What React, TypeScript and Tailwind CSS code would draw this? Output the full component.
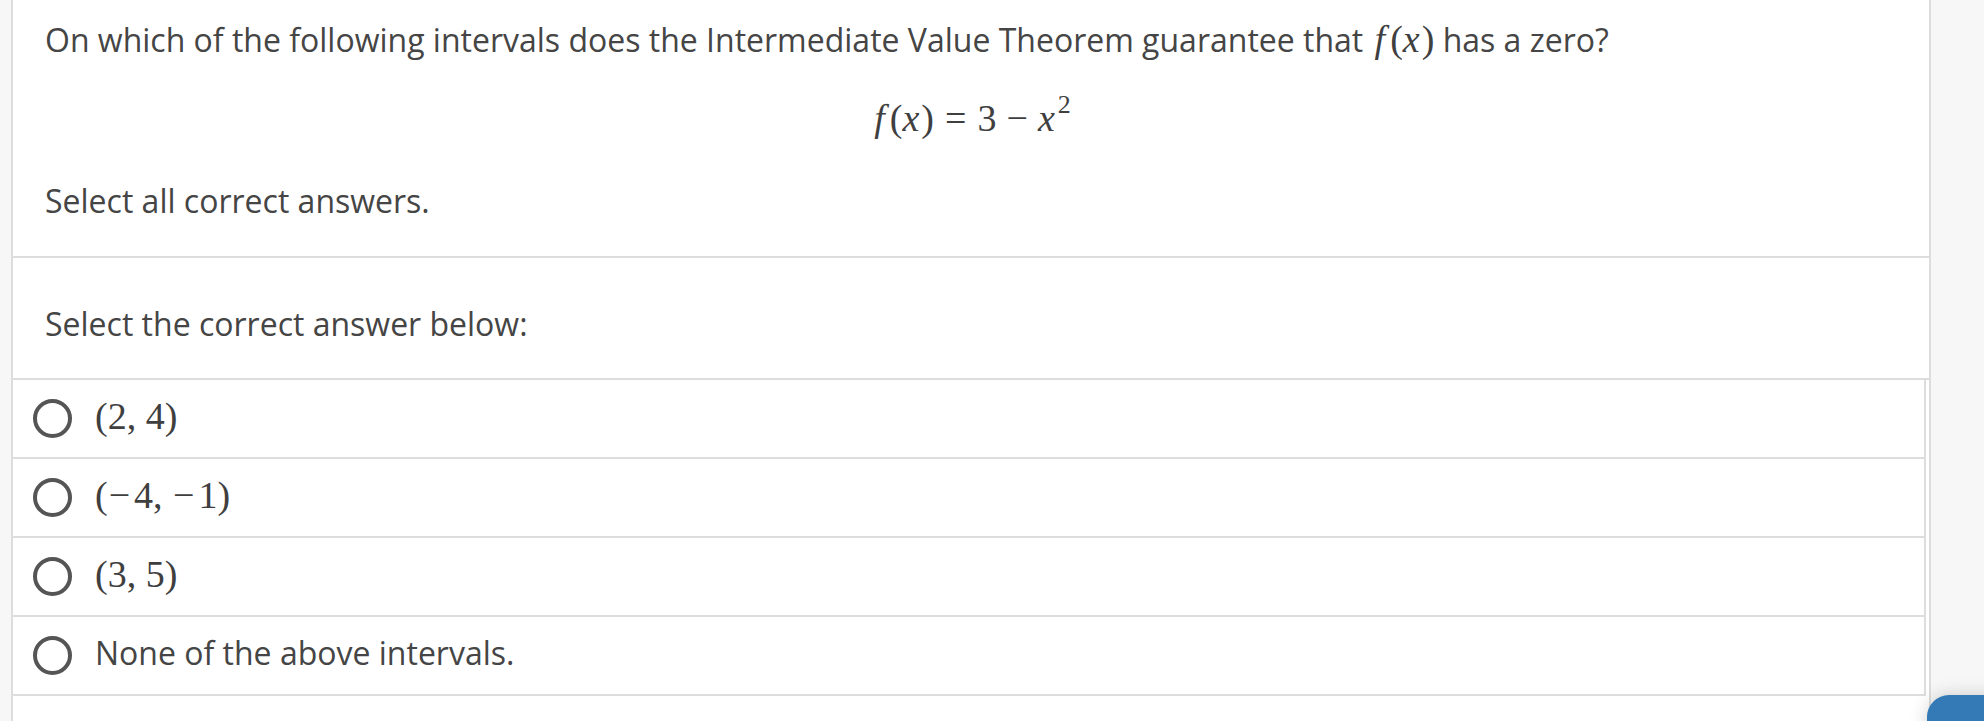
import React from 'react';

const M = '\u2212';

const options = [
  { id: 'a', math: true, label: ['(2, 4)'] },
  { id: 'b', math: true, label: ['(', M, '4, ', M, '1)'] },
  { id: 'c', math: true, label: ['(3, 5)'] },
  { id: 'd', math: false, label: ['None of the above intervals.'] },
];

function Radio() {
  return (
    <span className="block w-[39px] h-[39px] shrink-0 rounded-full border-4 border-[#555555] bg-white" />
  );
}

// f(x) rendered like MathJax: italic letters, upright parens
function Fx() {
  return (
    <>
      <i className="ml-[3px] mr-[5px]">f</i>(<i className="mr-[2px]">x</i>)
    </>
  );
}

export default function App() {
  return (
    <div className="relative h-[721px] overflow-hidden bg-[#f7f7f7] font-['Open_Sans',sans-serif] text-[#454545]">
      <div className="ml-[11px] w-[1920px] h-full bg-white border-x-2 border-[#dddddd]">
        {/* Question stem */}
        <div className="px-8 pt-[17px] pb-[33px] border-b-2 border-[#dddddd]">
          <p className="text-[32px] leading-[44px] whitespace-nowrap">
            On which of the following intervals does the Intermediate Value Theorem guarantee that{' '}
            <span className="font-['Liberation_Serif',serif] text-[38px] text-[#3f3f3f]">
              <Fx />
            </span>{' '}
            has a zero?
          </p>
          <p className="mt-[32px] text-center font-['Liberation_Serif',serif] text-[38px] leading-[48px] text-[#3f3f3f]">
            <Fx />
            <span className="mx-[11px]">=</span>3<span className="mx-[10px]">&minus;</span>
            <i>x</i>
            <sup className="ml-[3px] -top-[0.7em] text-[26px]">2</sup>
          </p>
          <p className="mt-[37px] text-[32px] leading-[44px]">Select all correct answers.</p>
        </div>

        {/* Prompt */}
        <div className="px-8 pt-[44px] pb-[32px] border-b-2 border-[#dddddd]">
          <p className="text-[32px] leading-[44px]">Select the correct answer below:</p>
        </div>

        {/* Answer choices */}
        <ul className="mr-[3px] border-r-2 border-[#dddddd]">
          {options.map(opt => (
            <li
              key={opt.id}
              className="h-[79px] flex items-center gap-[23px] pl-[20px] border-b-2 border-[#dddddd]"
            >
              <Radio />
              {opt.math ? (
                <span className="mb-[5px] font-['Liberation_Serif',serif] text-[38px] leading-none text-[#3f3f3f]">
                  {opt.label.map((part, i) =>
                    part === M ? (
                      <span key={i} className="pl-[1px] pr-[4px]">
                        {part}
                      </span>
                    ) : (
                      <span key={i}>{part}</span>
                    )
                  )}
                </span>
              ) : (
                <span className="mb-[5px] text-[32px] leading-[44px]">{opt.label[0]}</span>
              )}
            </li>
          ))}
        </ul>
      </div>

      {/* Floating action button peeking in from the corner */}
      <div className="absolute left-[1927px] top-[695px] w-[80px] h-[60px] rounded-tl-[22px] bg-[#337ab7] shadow-[0_0_18px_rgba(0,0,0,0.18)]" />
    </div>
  );
}
